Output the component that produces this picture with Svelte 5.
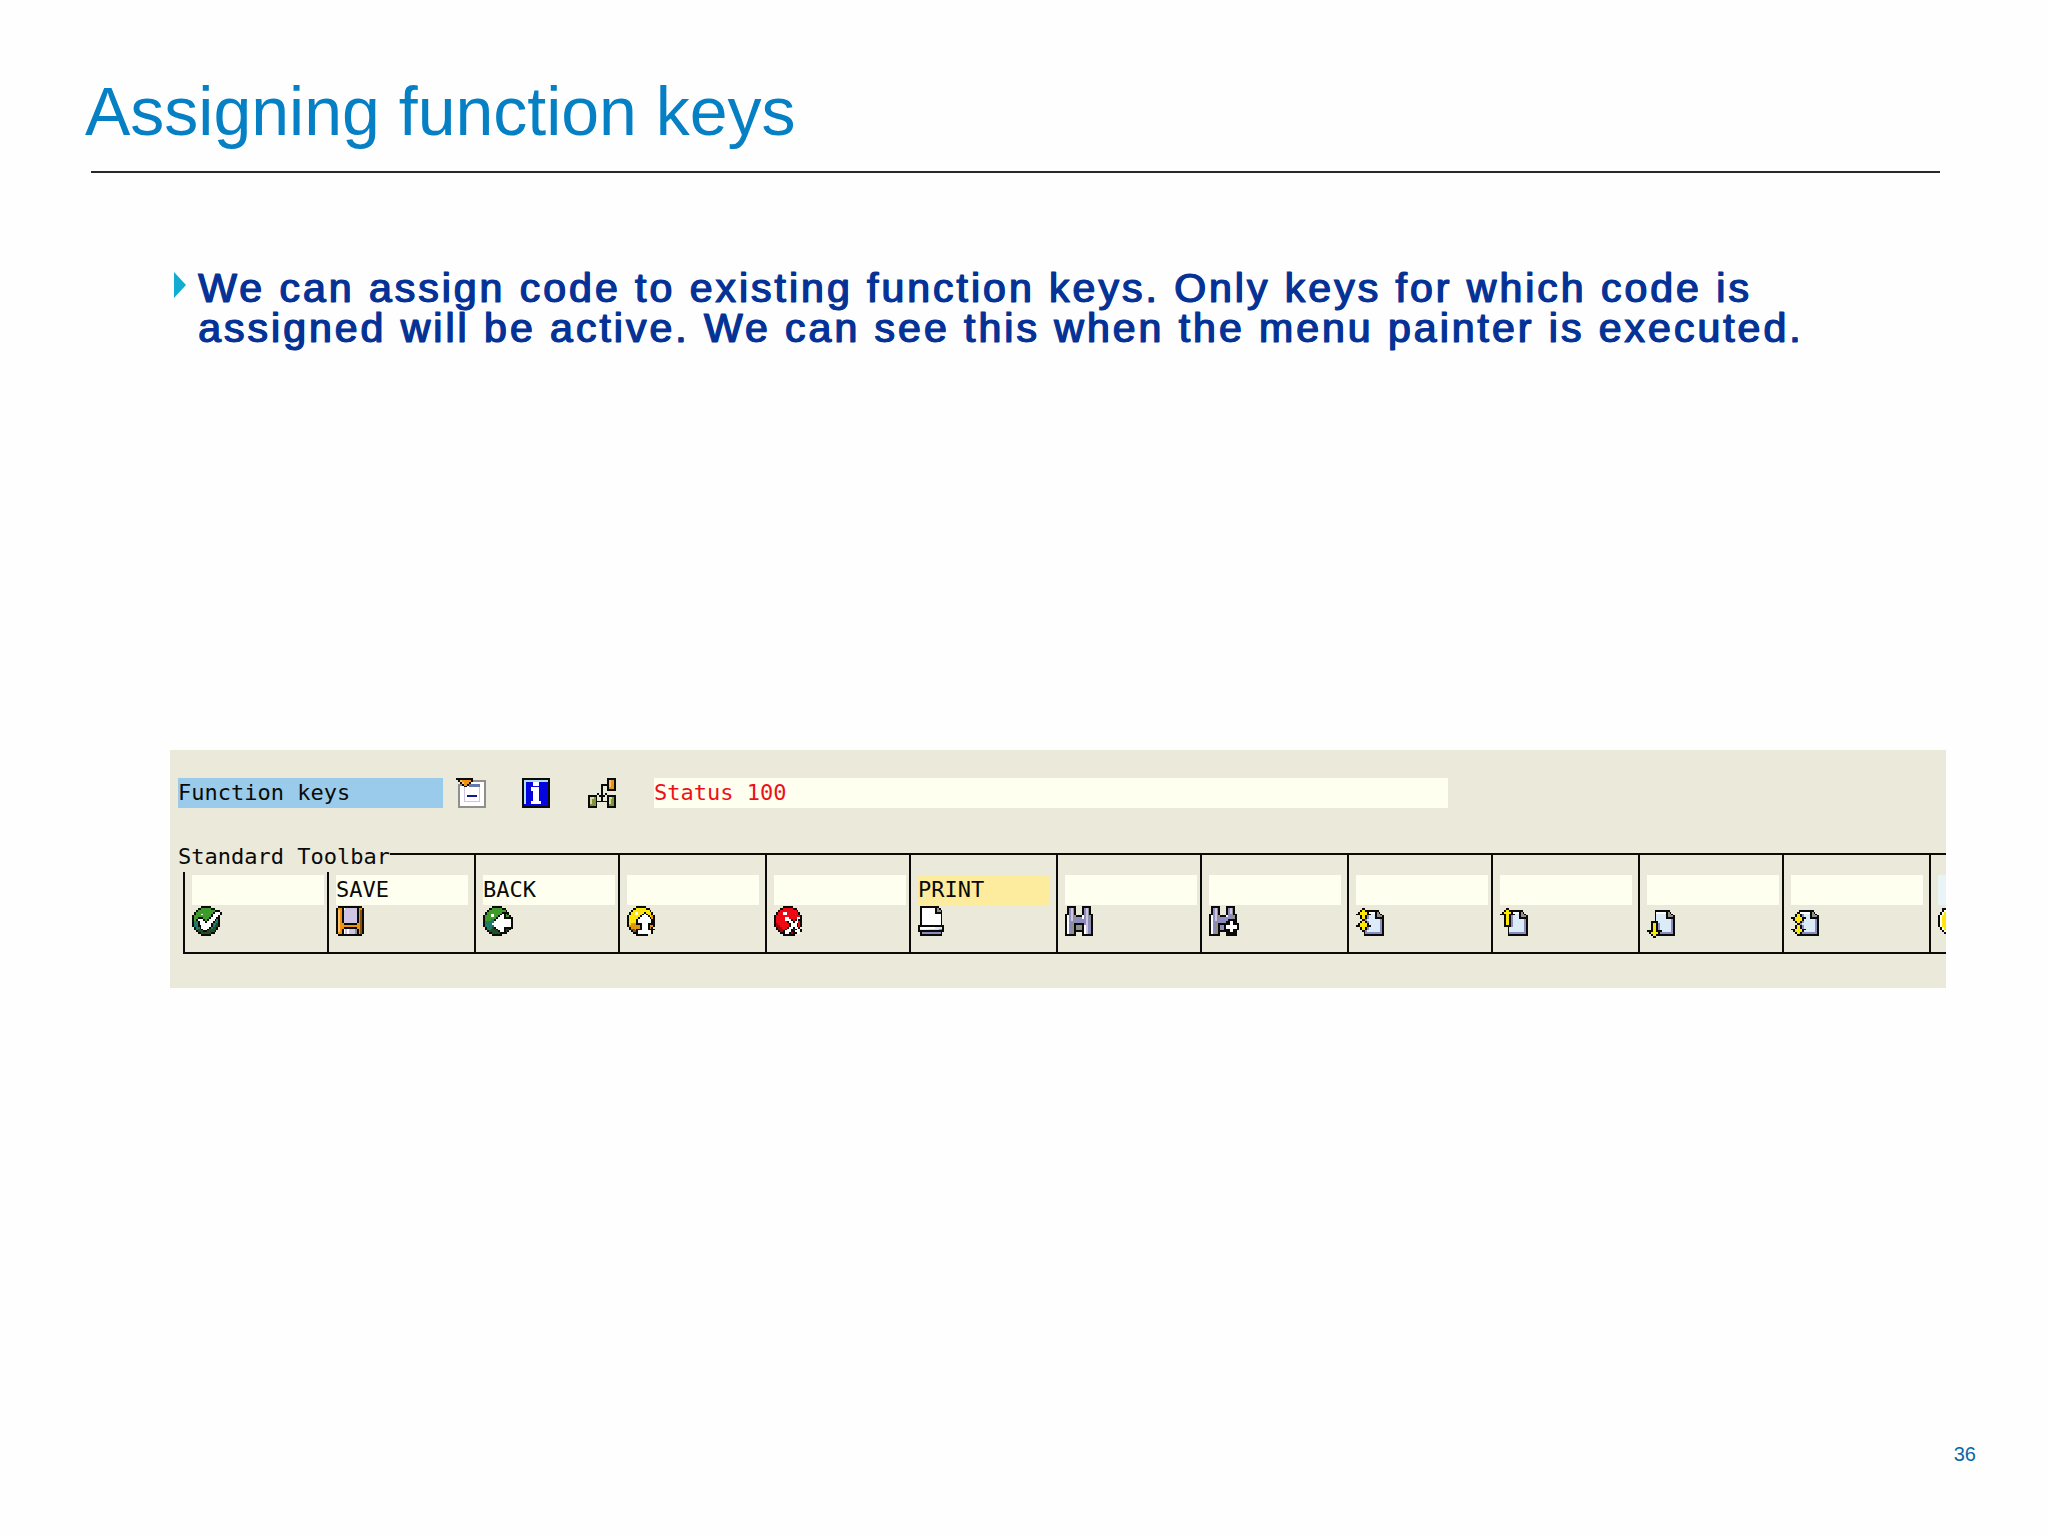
<script lang="ts">
	interface Key {
		name: string;
		icon: string;
		code?: string;
		state?: 'active' | 'locked';
	}

	const palette: Record<string, string> = {
		k: '#0a0a08',
		w: '#ffffff',
		g: '#3f9a2c',
		t: '#1f7a68',
		d: '#1d4f22',
		o: '#f0930f',
		O: '#ffc070',
		l: '#cfc4e2',
		y: '#ffe60a',
		m: '#e0960c',
		b: '#8a5208',
		r: '#ee0a12',
		R: '#a30510',
		e: '#8f8f8c',
		p: '#8c8cbe',
		c: '#b4dcf6',
		u: '#0505e0',
		n: '#14148c',
		B: '#6478ae',
		s: '#dcebf8',
		v: '#84923c',
		a: '#d3dc9a'
	};

	// 16 x 16 icons, one character per pixel
	const icons: Record<string, string[]> = {
		menu: [
			'kkkkkkkkk.......',
			'.kOoooookeeeeeee',
			'..kOoookwwwwwwwe',
			'.eekookBBBBBBwwe',
			'.ewwkkwBBBBBBwwe',
			'.ewwlwwwwwwwlwwe',
			'.ewwlwwwwwwwlwwe',
			'.ewwlwwwwwwwlwwe',
			'.ewwlwwwwwwwlwwe',
			'.ewwlwnnnnnwlwwe',
			'.ewwlwwwwwwwlwwe',
			'.ewwlwwwwwwwlwwe',
			'.ewwlllllllllwwe',
			'.ewwwwwwwwwwwwwe',
			'.ewwwwwwwwwwwwwe',
			'.eeeeeeeeeeeeeee'
		],
		info: [
			'kkkkkkkkkkkkkkk',
			'kccccccccccccck',
			'kcuuuuwwwuuuuuk',
			'kcuuuuwwwuuuuuk',
			'kcuuuuuuuuuuuuk',
			'kcuuuwwwwuuuuuk',
			'kcuuuwwwwuuuuuk',
			'kcuuuuwwwuuuuuk',
			'kcuuuuwwwuuuuuk',
			'kcuuuuwwwuuuuuk',
			'kcuuuuwwwuuuuuk',
			'kcuuuuwwwuuuuuk',
			'kcuuuwwwwwuuuuk',
			'kcuuuwwwwwuuuuk',
			'kuuuuuuuuuuuuuk',
			'kkkkkkkkkkkkkkk'
		],
		tree: [
			'..........kkkkk',
			'..........kOook',
			'..........kOook',
			'.......kkkkOomk',
			'.......k..kOomk',
			'.......k..kommk',
			'.......k..kkkkk',
			'.......k.......',
			'.....k.k.k.....',
			'kkkkk.kkk.kkkkk',
			'kaavk..k..kaavk',
			'kavvk..k..kavvk',
			'kavvkkkkkkkavvk',
			'kavvk.....kavvk',
			'kvvvk.....kvvvk',
			'kkkkk.....kkkkk'
		],
		enter: [
			'.....kkkkk......',
			'...kkgggggkk....',
			'..kgggggggggkkk.',
			'.kgggggggggkwwwk',
			'.kgggwggggkwwwwk',
			'kgggggggggkwwwk.',
			'kggkkkgggkwwwkk.',
			'kgkwwwkgkwwwktk.',
			'kttkwwwkwwwkttk.',
			'kttkwwwwwwkttdk.',
			'kttkkwwwwwktddk.',
			'.kttkwwwwktddk..',
			'.ktddkwwkddddk..',
			'..kdddkkddddk...',
			'...kkdddddkk....',
			'.....kkkkk......'
		],
		save: [
			'.kkkkkkkkkkkkk.',
			'kookwllllllkook',
			'kOoklllllllkobk',
			'kOoklllllllkobk',
			'kOoklllllllkobk',
			'kOoklllllllkobk',
			'kOoklllllllkobk',
			'kOoklllllllkobk',
			'kOoklllllllkobk',
			'kOookkkkkkkoobk',
			'kOooooooooooobk',
			'kOookkkkkkkoobk',
			'kOokwlwlllekobk',
			'kOokwlwlllekobk',
			'kookwlwlllekobk',
			'.kkkkkkkkkkkkk.'
		],
		back: [
			'.....kkkkk......',
			'...kkgggggkk....',
			'..kgggggggggk...',
			'.kggggggggkkkk..',
			'.kggwwgggkwkgk..',
			'kgggwwggkwwkggk.',
			'kggggggkwwwkkkkk',
			'kgggttkwwwwwwwwk',
			'ktttttwwwwwwwwwk',
			'kttttwwwwwwwwwwk',
			'ktttttwwwwwwwwwk',
			'.ktttdkwwwwkkkkk',
			'.kttdddkwwwkddk.',
			'..kdddddkwwkdk..',
			'...kkddddkkkk...',
			'.....kkkkk......'
		],
		exit: [
			'.....kkkkk.....',
			'...kkyyyyykk...',
			'..kyyyyyyyyyk..',
			'.kyywwyyykyyyk.',
			'.kyywwyykwkyyk.',
			'kyyyyyykwwwkymk',
			'kyyyyykwwwwwkmk',
			'kyyyykwwwwwwwkk',
			'kyyyykwwwwwwwkk',
			'kymmmkkkwwwkkkk',
			'kmmmmmmkwwwkmmk',
			'.kmmmmmkwwwkmk.',
			'.kbbmkkkwwwkkkk',
			'..kbbkwwwwwwwk.',
			'...kkkwwwwwwwk.',
			'.....kkkkkk....'
		],
		cancel: [
			'.....kkkkk.....',
			'...kkrrrrrkk...',
			'..krrrrrrrrrk..',
			'.krrrwwrrrrrrk.',
			'.krrrwwrrrrrrk.',
			'krrrrrrrrrrrrrk',
			'krrrrrwwrrrrwwk',
			'krrrrrwwwkrkwkk',
			'krrrrrrkwwkwwrk',
			'kRrrrrrrkwwwkrk',
			'kRRrrrrrkwwwkrk',
			'.kRRrrrkwwkwwk.',
			'.kRRRrkwwkRkwwk',
			'..kRRkwwwkkwwwk',
			'...kkkwwkRkkww.',
			'.....kkkkkk....'
		],
		print: [
			'.kkkkkkkkkk...',
			'.kwwwwwwwkek..',
			'.kwwwwwwwkeek.',
			'.kwwwwwwwkkkk.',
			'.kwwwwwwwwwwk.',
			'.kwwwwwwwwwwk.',
			'.kwwwwwwwwwwk.',
			'.kwwwwwwwwwwk.',
			'.kwwwwwwwwwwk.',
			'.kwwwwwwwwwwk.',
			'kkkkkkkkkkkkkk',
			'kwwwwwwwwssssk',
			'kssssscccccppk',
			'kkkkkkkkkkkkkk',
			'.kppppppppppk.',
			'.kkkkkkkkkkkk.'
		],
		find: [
			'.kkkkk...kkkkk.',
			'.kplek...kplek.',
			'.kplek...kplek.',
			'.kplek...kplek.',
			'kkplek...kplekk',
			'kwplpekkkwplpek',
			'kwplpepppwplpek',
			'kwplppppppplpek',
			'kwpeppppppplpek',
			'kwpepkkkkkplpek',
			'kwpepkeeekwlppk',
			'kwpepkeeekwlppk',
			'kwpepkeeekwlppk',
			'kwpepkkkkkwlppk',
			'kwpepk...kwlppk',
			'kkkkkk...kkkkkk'
		],
		findNext: [
			'.kkkkk...kkkkk..',
			'.kplek...kplek..',
			'.kplek...kplek..',
			'.kplek...kplek..',
			'kkplek...kppekk.',
			'kwplpekkkwppeek.',
			'kwplpepppppppek.',
			'kwplppppppkkkkk.',
			'kwpepppppkkwwkk.',
			'kwpepkkkkkkwwkkk',
			'kwpepkppkwwwwwwk',
			'kwpepkppkwwwwwwk',
			'kwpepkppkkkwwkkk',
			'kwpepkkkkkkwwkk.',
			'kwpepk...kkkkkk.',
			'kkkkkk...kkkkkk.'
		],
		firstPage: [
			'...............',
			'...kk..........',
			'..kyykkkkkkk...',
			'.kyyyykwwwkek..',
			'kkyyyykksskeek.',
			'..kyykpssskeeek',
			'..kyykpssskkkkk',
			'...kkpssssssspk',
			'..kyykpsssssspk',
			'.kyyyyksssssspk',
			'kkyyyykkssssspk',
			'..kyykpsssssspk',
			'..kyykpsssssspk',
			'...kkpssssssspk',
			'....kpppppppppk',
			'....kkkkkkkkkkk'
		],
		prevPage: [
			'...............',
			'...kk..........',
			'..kyykkkkkkk...',
			'.kyyyykwwwkek..',
			'kkkyykkksskeek.',
			'..kyykpssskeeek',
			'..kyykpssskkkkk',
			'..kyykpsssssspk',
			'..kyykpsssssspk',
			'..kyykpsssssspk',
			'..kkkkpsssssspk',
			'....ksssssssspk',
			'....ksssssssspk',
			'....ksssssssspk',
			'....kpppppppppk',
			'....kkkkkkkkkkk'
		],
		nextPage: [
			'...............',
			'...............',
			'....kkkkkkkk...',
			'....kwwwwwkek..',
			'....kssssskeek.',
			'....kssssskeeek',
			'....kssssskkkkk',
			'....ksssssssspk',
			'..kkkkssssssspk',
			'..kyykpsssssspk',
			'..kyykpsssssspk',
			'..kyykpsssssspk',
			'..kyykpsssssspk',
			'kkkyykkkssssspk',
			'.kyyyykpppppppk',
			'..kyykkkkkkkkkk',
			'...kk..........'
		],
		lastPage: [
			'...............',
			'...............',
			'....kkkkkkkk...',
			'...kkwwwwwkek..',
			'..kyykpssskeek.',
			'..kyykpssskeeek',
			'kkyyyykksskkkkk',
			'.kyyyyksssssspk',
			'..kyykpsssssspk',
			'...kkpssssssspk',
			'..kyykpsssssspk',
			'..kyykpsssssspk',
			'kkyyyykkssssspk',
			'.kyyyyksssssspk',
			'..kyykppppppppk',
			'...kkkkkkkkkkkk'
		],
		help: [
			'....kkkkkkk....',
			'..kkwyyyyyykk..',
			'..kwyyyyyyyyk..',
			'.kwyykkkyyyyyk.',
			'.kwykrrrkkyyyk.',
			'kwyykrkrrrkyymk',
			'kwyyykykrrkyymk',
			'kwyyyyyykrrkymk',
			'kwyyyyykrrkyymk',
			'kwyyyykrrkyyymk',
			'kwyyyykkkyyymmk',
			'.kwyyykrrkymmk.',
			'.kwyyykkkmmmmk.',
			'..kwmmmmmmmmk..',
			'...kkmmmmmkk...',
			'.....kkkkk.....'
		]
	};

	const actions: Key[] = [
		{ name: 'Collapse', icon: 'menu' },
		{ name: 'Information', icon: 'info' },
		{ name: 'Where used', icon: 'tree' }
	];

	let keys: Key[] = $state([
		{ name: 'Enter', icon: 'enter', code: '' },
		{ name: 'Save', icon: 'save', code: 'SAVE' },
		{ name: 'Back', icon: 'back', code: 'BACK' },
		{ name: 'Exit', icon: 'exit', code: '' },
		{ name: 'Cancel', icon: 'cancel', code: '' },
		{ name: 'Print', icon: 'print', code: 'PRINT', state: 'active' },
		{ name: 'Find', icon: 'find', code: '' },
		{ name: 'Find next', icon: 'findNext', code: '' },
		{ name: 'First page', icon: 'firstPage', code: '' },
		{ name: 'Previous page', icon: 'prevPage', code: '' },
		{ name: 'Next page', icon: 'nextPage', code: '' },
		{ name: 'Last page', icon: 'lastPage', code: '' },
		{ name: 'Help', icon: 'help', code: '', state: 'locked' }
	]);

	let status = $state('Status 100');

	// merge neighbouring pixels of one colour into a single rect
	function runs(row: string) {
		return [...row.matchAll(/([^.])\1*/g)].map((m) => ({
			x: m.index,
			width: m[0].length,
			fill: palette[m[1]]
		}));
	}
</script>

{#snippet pixelIcon(name: string)}
	<svg class="icon" viewBox="0 0 16 16" shape-rendering="crispEdges" aria-hidden="true">
		{#each icons[name] as row, y}
			{#each runs(row) as run}
				<rect x={run.x} {y} width={run.width} height="1" fill={run.fill} />
			{/each}
		{/each}
	</svg>
{/snippet}

<main class="slide">
	<h1>Assigning function keys</h1>
	<hr />

	<ul>
		<li>
			<svg class="bullet" viewBox="0 0 12 26" aria-hidden="true">
				<path d="M0 0L12 13L0 26Z" fill="#12acd2" />
			</svg>
			<span>
				We can assign code to existing function keys. Only keys for which code is assigned will be
				active. We can see this when the menu painter is executed.
			</span>
		</li>
	</ul>

	<section class="painter">
		<div class="status-row">
			<label for="status">Function keys</label>
			<div class="actions">
				{#each actions as action}
					<button type="button" aria-label={action.name}>{@render pixelIcon(action.icon)}</button>
				{/each}
			</div>
			<input id="status" type="text" bind:value={status} />
		</div>

		<div class="toolbar">
			<h2>Standard Toolbar</h2>
			<div class="keys">
				{#each keys as key}
					<div class="key">
						<input
							type="text"
							class={key.state}
							bind:value={key.code}
							aria-label="{key.name} function code"
						/>
						<button type="button" aria-label={key.name}>{@render pixelIcon(key.icon)}</button>
					</div>
				{/each}
			</div>
		</div>
	</section>

	<footer>36</footer>
</main>

<style>
	:global(body) {
		margin: 0;
		background: #fefefe;
	}

	.slide {
		box-sizing: border-box;
		display: flex;
		flex-direction: column;
		min-height: 100vh;
		padding: 73px 0 70px;
		font-family: 'Liberation Sans', Arial, sans-serif;
	}

	h1 {
		margin: 0 85px;
		font-size: 68px;
		line-height: 76px;
		font-weight: 400;
		color: #0580c4;
	}

	hr {
		height: 2px;
		margin: 22px 108px 0 91px;
		border: 0;
		background: #2b2728;
	}

	ul {
		margin: 95px 160px 0 174px;
		padding: 0;
		list-style: none;
	}

	/* regular cut, thickened mostly sideways */
	li {
		display: flex;
		gap: 12px;
		font-size: 41px;
		line-height: 40px;
		letter-spacing: 3px;
		color: #043296;
		-webkit-text-stroke: 1px #043296;
		text-shadow: 1px 0 #043296;
	}

	.bullet {
		flex: none;
		width: 12px;
		height: 26px;
		margin-top: 4px;
	}

	.painter {
		margin: 402px 102px 0 170px;
		padding: 28px 0 34px;
		background: #ebe9da;
		overflow: hidden;
	}

	.painter,
	.painter input {
		font-family: 'DejaVu Sans Mono', monospace;
		font-size: 22px;
		line-height: 30px;
		color: #0a0a08;
	}

	.painter input {
		box-sizing: border-box;
		height: 30px;
		padding: 0;
		border: 0;
		outline: none;
		background: #fffff0;
	}

	button {
		display: block;
		padding: 0;
		border: 0;
		background: none;
	}

	.icon {
		display: block;
		width: 30px;
		height: 30px;
		overflow: visible;
	}

	.status-row {
		display: flex;
		margin-left: 8px;
	}

	label {
		width: 265px;
		background: #9bcbea;
	}

	.actions {
		display: flex;
		gap: 36px;
		margin: 0 36px 0 13px;
	}

	.painter #status {
		flex: 0 1 794px;
		min-width: 0;
		color: #ee1018;
	}

	.toolbar {
		position: relative;
		margin: 45px 0 0 13px;
	}

	/* sits on the frame and hides the part of it behind the text */
	h2 {
		position: absolute;
		top: -11px;
		left: -5px;
		margin: 0;
		background: #ebe9da;
		font-size: 22px;
		line-height: 30px;
		font-weight: 400;
	}

	.keys {
		display: grid;
		grid-template-columns: repeat(6, 144fr 147fr) 17fr;
		border-top: 2px solid #0a0a08;
		border-bottom: 2px solid #0a0a08;
	}

	.key {
		display: flex;
		flex-direction: column;
		align-items: flex-start;
		gap: 1px;
		min-width: 0;
		padding: 20px 0 16px 7px;
		border-left: 2px solid #0a0a08;
		overflow: hidden;
	}

	.key input {
		flex: none;
		width: 132px;
	}

	.painter .active {
		background: #feec9e;
	}

	.painter .locked {
		background: #e9f4f6;
	}

	footer {
		margin-top: auto;
		padding-right: 72px;
		font-size: 20px;
		line-height: 24px;
		text-align: right;
		color: #0a66a4;
	}
</style>
